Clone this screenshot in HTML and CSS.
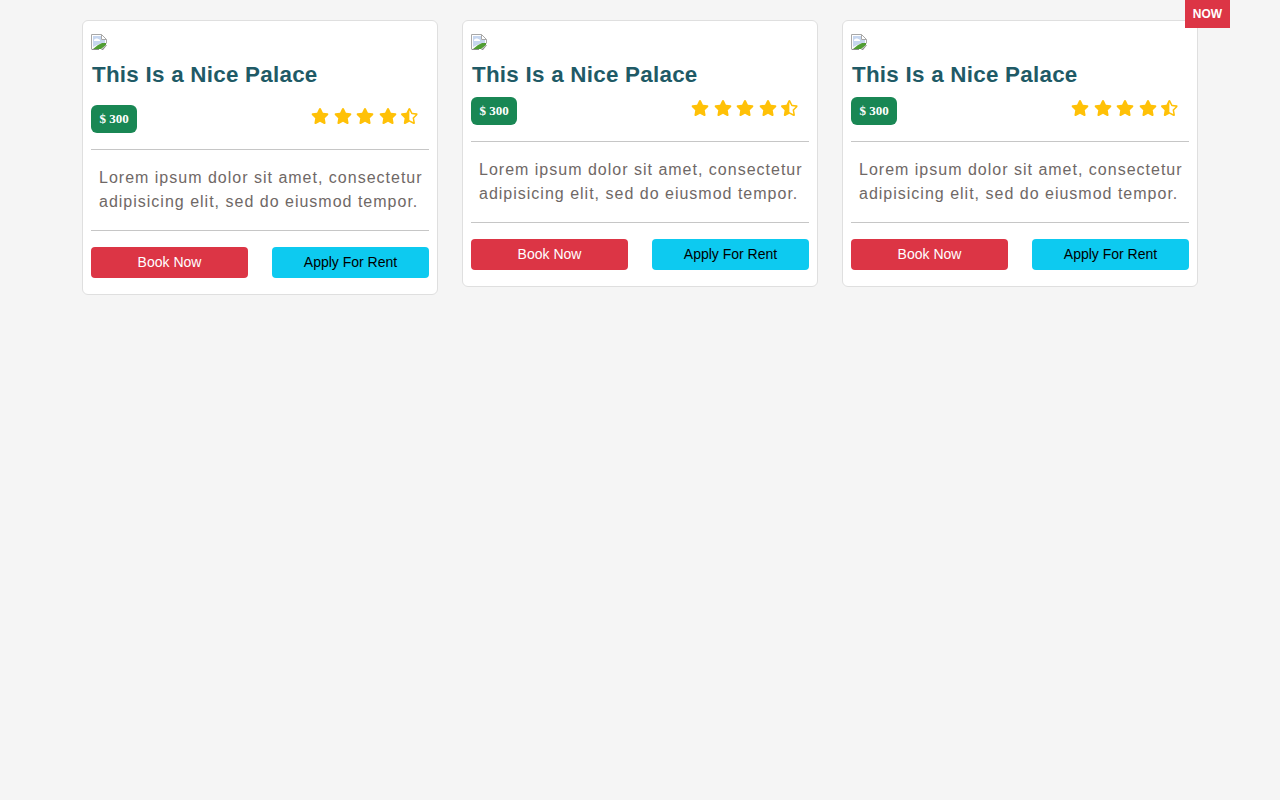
FILE: index.html
```html
<!DOCTYPE html>
<html lang="en">
<head>
<meta charset="utf-8">
<title>Palaces</title>
<link rel="stylesheet" href="styles.css">
</head>
<body>
<svg class="sprite" width="0" height="0" aria-hidden="true">
  <symbol id="star" viewBox="0 0 576 512"><path fill="currentColor" d="M259.3 17.8L194 150.2 47.9 171.5c-26.2 3.8-36.7 36.1-17.7 54.6l105.7 103-25 145.5c-4.5 26.3 23.2 46 46.4 33.7L288 439.6l130.7 68.7c23.2 12.2 50.9-7.4 46.4-33.7l-25-145.5 105.7-103c19-18.5 8.5-50.8-17.7-54.6L382 150.2 316.7 17.8c-11.7-23.6-45.6-24.1-57.4 0z"/></symbol>
  <symbol id="star-half" viewBox="0 0 536 512"><path fill="currentColor" d="M508.55 171.51L362.18 150.2 296.77 17.81C290.89 5.98 279.42 0 267.95 0c-11.4 0-22.79 5.9-28.69 17.81l-65.43 132.38-146.38 21.29c-26.25 3.8-36.77 36.09-17.74 54.59l105.89 103-25.06 145.48C86.98 495.33 103.57 512 122.15 512c4.93 0 10-1.17 14.87-3.75l130.95-68.68 130.94 68.7c4.86 2.55 9.92 3.71 14.83 3.71 18.6 0 35.22-16.61 31.66-37.4l-25.03-145.49 105.91-102.98c19.04-18.5 8.52-50.8-17.73-54.6zm-121.74 123.2l-18.12 17.62 4.28 24.88 19.52 113.45-102.13-53.59-22.38-11.74.03-317.19 51.03 103.29 11.18 22.63 25.01 3.64 114.23 16.63-82.65 80.38z"/></symbol>
  <symbol id="broken" viewBox="0 0 16 16">
    <path fill="#fff" d="M0 0h11l5 5v11H0z"/>
    <path fill="none" stroke="#a8a8a8" d="M.5 15.5V.5h10l5 5v4"/>
    <path fill="none" stroke="#a8a8a8" d="M10.5.5v5h5"/>
    <path fill="#c6d6ef" d="M2 2h8v4h4v3l-6 1-6 3z"/>
    <path fill="#fff" d="M3 6c1-2 4-2 6 0v1H3z"/>
    <path fill="#4f9d33" d="M2 15l5-4 4-2h4v2l-5 4z"/>
    <path fill="#8f8f8f" d="M15 11h1l-4 5h-2z"/>
    <path fill="#8f8f8f" d="M1 15h7v1H1z"/>
  </symbol>
</svg>
<span class="ribbon">NOW</span>
<main class="grid">
  <article class="card card-tall">
    <svg class="thumb"><use href="#broken"/></svg>
    <h2 class="title">This Is a Nice Palace</h2>
    <div class="meta">
      <span class="price">$ 300</span>
      <span class="stars"><svg class="star"><use href="#star"/></svg> <svg class="star"><use href="#star"/></svg> <svg class="star"><use href="#star"/></svg> <svg class="star"><use href="#star"/></svg> <svg class="star half"><use href="#star-half"/></svg></span>
    </div>
    <hr class="rule">
    <p class="desc">Lorem ipsum dolor sit amet, consectetur adipisicing elit, sed do eiusmod tempor.</p>
    <hr class="rule">
    <div class="actions"><button class="btn btn-book">Book Now</button><button class="btn btn-rent">Apply For Rent</button></div>
  </article>
  <article class="card">
    <svg class="thumb"><use href="#broken"/></svg>
    <h2 class="title">This Is a Nice Palace</h2>
    <div class="meta">
      <span class="price">$ 300</span>
      <span class="stars"><svg class="star"><use href="#star"/></svg> <svg class="star"><use href="#star"/></svg> <svg class="star"><use href="#star"/></svg> <svg class="star"><use href="#star"/></svg> <svg class="star half"><use href="#star-half"/></svg></span>
    </div>
    <hr class="rule">
    <p class="desc">Lorem ipsum dolor sit amet, consectetur adipisicing elit, sed do eiusmod tempor.</p>
    <hr class="rule">
    <div class="actions"><button class="btn btn-book">Book Now</button><button class="btn btn-rent">Apply For Rent</button></div>
  </article>
  <article class="card">
    <svg class="thumb"><use href="#broken"/></svg>
    <h2 class="title">This Is a Nice Palace</h2>
    <div class="meta">
      <span class="price">$ 300</span>
      <span class="stars"><svg class="star"><use href="#star"/></svg> <svg class="star"><use href="#star"/></svg> <svg class="star"><use href="#star"/></svg> <svg class="star"><use href="#star"/></svg> <svg class="star half"><use href="#star-half"/></svg></span>
    </div>
    <hr class="rule">
    <p class="desc">Lorem ipsum dolor sit amet, consectetur adipisicing elit, sed do eiusmod tempor.</p>
    <hr class="rule">
    <div class="actions"><button class="btn btn-book">Book Now</button><button class="btn btn-rent">Apply For Rent</button></div>
  </article>
</main>
</body>
</html>
```
FILE: styles.css
```css
* { box-sizing: border-box; }
html, body { margin: 0; height: 100%; }
body {
  position: relative;
  min-height: 800px;
  overflow: hidden;
  background: #f5f5f5;
  font-family: "Liberation Sans", Arial, sans-serif;
  font-size: 16px;
  line-height: 24px;
}
.sprite { position: absolute; }
.ribbon {
  position: absolute;
  top: 0;
  left: 1185px;
  width: 45px;
  height: 28px;
  background: #dc3545;
  color: #fff;
  font-size: 12px;
  font-weight: 700;
  line-height: 28px;
  text-align: center;
}
.grid {
  display: grid;
  grid-template-columns: repeat(3, 356px);
  gap: 24px;
  align-items: start;
  width: 1116px;
  margin: 20px auto 0 82px;
}
.card {
  display: flex;
  flex-direction: column;
  background: #fff;
  border: 1px solid #dfdfdf;
  border-radius: 6px;
  padding: 13px 8px 16px;
}
.thumb { display: block; width: 16px; height: 16px; flex: none; }
.title {
  margin: 10px 0 8px 1px;
  color: #1f5a66;
  font-size: 22.4px;
  font-weight: 700;
  line-height: 29px;
  letter-spacing: .25px;
}
.meta {
  display: flex;
  justify-content: space-between;
  align-items: flex-start;
}
.card-tall .meta { margin-top: 8px; }
.price {
  width: 46px;
  height: 28px;
  border-radius: 6px;
  background: #198754;
  color: #fff;
  font-family: "Liberation Serif", serif;
  font-size: 13px;
  font-weight: 700;
  line-height: 28px;
  text-align: center;
}
.stars { margin: 3px 11px 0 0; color: #ffc107; line-height: 16px; }
.star { display: inline-block; width: 18px; height: 16px; }
.star.half { width: 16.75px; }
.rule {
  width: 100%;
  margin: 16px 0 0;
  border: 0;
  border-top: 1px solid #c6c6c6;
}
.desc {
  margin: 16px 0;
  padding: 0 0 0 8px;
  color: #6f6866;
  letter-spacing: 1px;
}
.rule + .desc + .rule { margin-top: 0; }
.actions { display: flex; justify-content: space-between; margin-top: 16px; }
.btn {
  width: 157px;
  height: 31px;
  padding: 0 0 1px;
  border: 0;
  border-radius: 4px;
  font-family: inherit;
  font-size: 14px;
  line-height: 29px;
}
.btn-book { background: #dc3545; color: #fff; }
.btn-rent { background: #0dcaf0; color: #000; }
```
